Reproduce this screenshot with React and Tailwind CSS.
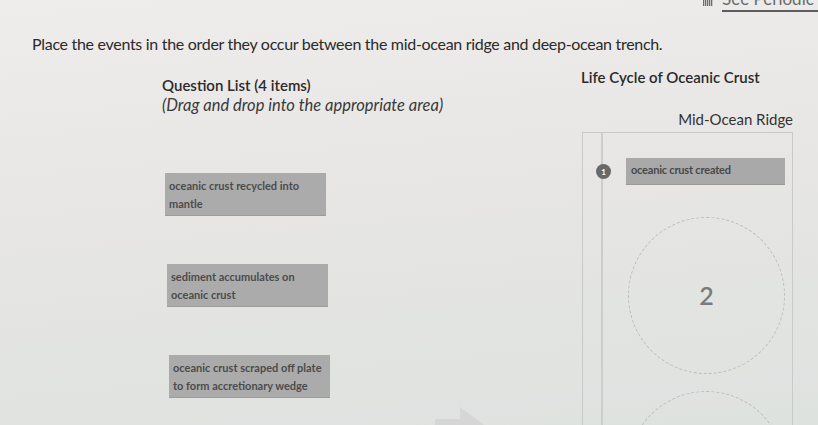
import React from 'react';

const questionItems = [
  { id: 'recycled', text: 'oceanic crust recycled into mantle', shift: 'ml-[3px]' },
  { id: 'sediment', text: 'sediment accumulates on oceanic crust', shift: 'ml-[5px]' },
  { id: 'scraped', text: 'oceanic crust scraped off plate to form accretionary wedge', shift: 'ml-[7px]' },
];

const DragCard = ({ text, className = '' }) => (
  <div
    className={`w-[161px] h-[43px] bg-[#ababab] border-b border-[#9c9c9c] px-[4px] py-[4px] text-[11px] leading-[18px] font-bold text-[#4b4b4b] ${className}`}
  >
    {text}
  </div>
);

const DropSlot = ({ n }) => (
  <div className="w-[157px] h-[157px] shrink-0 rounded-full border border-dashed border-[#bcbcbc] flex items-center justify-center">
    {n && <span className="text-[25px] font-semibold text-[#7b7b7b]">{n}</span>}
  </div>
);

const App = () => {
  return (
    <div
      className="relative w-[818px] h-[425px] overflow-hidden bg-[linear-gradient(175deg,#eeedec_0%,#e7e6e5_45%,#dee2df_100%)] text-[#2c2c2c]"
      style={{ fontFamily: 'Lato, "Open Sans", sans-serif' }}
    >
      {/* periodic table link, cut off at the top edge */}
      <div className="-mt-[11px] ml-[703px] flex items-center whitespace-nowrap">
        <svg width="10" height="9" viewBox="0 0 10 9" className="shrink-0 mt-[4px]">
          {[0, 2, 4, 6, 8].map((x) => (
            <rect key={x} x={x} y="0" width="1.3" height="9" fill="#6e6e6e" />
          ))}
        </svg>
        <span className="shrink-0 ml-[9px] text-[17px] text-[#6a6a6a] leading-[20px]">See Periodic Table</span>
      </div>
      <div className="ml-[722px] mt-[1px] h-[2px] bg-[#5e5e5e]" />

      <p className="ml-[32px] mt-[22px] text-[16px] leading-[20px] tracking-[-0.3px] text-[#2a2a2a]">
        Place the events in the order they occur between the mid-ocean ridge and deep-ocean trench.
      </p>

      <div className="flex mt-[14px]">
        {/* question list */}
        <div className="ml-[162px] w-[300px] pt-[8px]">
          <h3 className="text-[15px] leading-[18px] font-semibold text-[#2a2a2a]">
            Question List (4 items)
          </h3>
          <p className="mt-[1px] text-[16.5px] leading-[20px] italic text-[#3a3a3a]">
            (Drag and drop into the appropriate area)
          </p>
          <div className="mt-[58px] flex flex-col gap-[48px]">
            {questionItems.map((item) => (
              <DragCard key={item.id} text={item.text} className={item.shift} />
            ))}
          </div>
        </div>

        {/* answer area */}
        <div className="ml-[119px] w-[212px]">
          <h3 className="text-[15px] leading-[18px] font-semibold text-[#2a2a2a]">
            Life Cycle of Oceanic Crust
          </h3>
          <p className="mt-[24px] text-right text-[15px] leading-[18px] text-[#333]">
            Mid-Ocean Ridge
          </p>
          <div className="mt-[4px] h-[320px] ml-[1px] border border-[#c9c9c9] flex">
            <div className="w-[20px] border-r-2 border-[#cdcdcd] shrink-0" />
            <div className="flex-1 pt-[25px] pr-[8px]">
              <div className="flex items-center">
                <div className="-ml-[7px] w-[15px] h-[15px] shrink-0 rounded-full bg-[#696969] flex items-center justify-center text-[8px] font-bold text-white">
                  1
                </div>
                <div className="ml-[15px] flex-1 h-[27px] bg-[#a9a9a9] border-b border-[#9a9a9a] px-[5px] pt-[5px] text-[11px] leading-[14px] font-bold text-[#484848] tracking-[-0.2px]">
                  oceanic crust created
                </div>
              </div>
              <div className="mt-[32px] ml-[25px] flex flex-col gap-[17px]">
                <DropSlot n="2" />
                <DropSlot />
              </div>
            </div>
          </div>
        </div>
      </div>

      {/* faint drag ghost arrow at the bottom */}
      <svg className="absolute left-[434px] top-[405px]" width="52" height="20" viewBox="0 0 52 20">
        <path d="M1 14 H26 V2 L50 20 H1 Z" fill="#d6d6d6" />
      </svg>
    </div>
  );
};

export default App;
